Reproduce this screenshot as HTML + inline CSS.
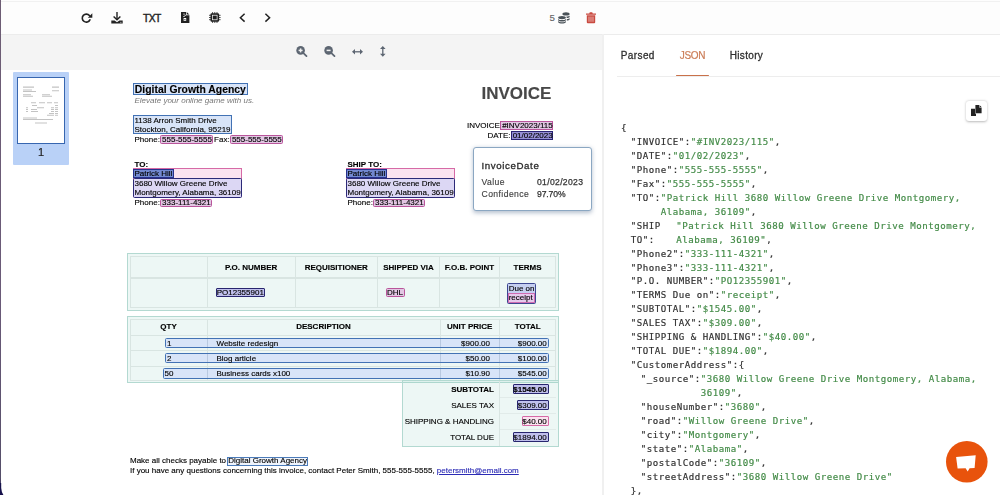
<!DOCTYPE html>
<html lang="en"><head><meta charset="utf-8"><title>Invoice parser</title>
<style>
html,body{margin:0;padding:0}
body{width:1000px;height:495px;position:relative;overflow:hidden;background:#fff;font-family:"Liberation Sans",sans-serif;color:#111}
#c{position:absolute;left:0;top:0;width:1000px;height:495px;filter:blur(0.4px)}
.b{position:absolute}
.t{position:absolute;white-space:nowrap;color:#000;-webkit-text-stroke:0.13px}
.m{position:absolute;white-space:pre;font-family:"DejaVu Sans Mono","Liberation Mono",monospace;font-size:9.1px;letter-spacing:0.522px;line-height:14px;color:#2f2f2f;-webkit-text-stroke:0.18px}
.m i{font-style:normal;color:#428a46}
svg{position:absolute;overflow:visible}
</style></head><body>
<div id="c">
<div class="b" style="left:0.00px;top:0.00px;width:1000.00px;height:34.00px;background:#fdfdfd;"></div>
<div class="b" style="left:0.00px;top:1.00px;width:1000.00px;height:1.00px;background:#f1f1f1;"></div>
<div class="b" style="left:0.00px;top:34.00px;width:1000.00px;height:1.00px;background:#ececec;"></div>
<div class="b" style="left:0.00px;top:34.50px;width:603.50px;height:35.50px;background:#f4f4f4;"></div>
<div class="b" style="left:602.40px;top:34.30px;width:2.00px;height:460.70px;background:#f0f0f0;"></div>
<div class="b" style="left:13.30px;top:72.30px;width:55.30px;height:92.30px;background:#b9d1f7;border-radius:1px;"></div>
<div class="b" style="left:17.30px;top:77.20px;width:47.50px;height:66.60px;background:#fff;border:1.4px solid #3766b0;box-sizing:border-box;"></div>
<svg style="left:18px;top:78px" width="46" height="65" viewBox="0 0 46 65"><g fill="#b4b4b4"><rect x="5" y="8.6" width="11" height="1"/><rect x="34" y="8.6" width="7" height="1"/><rect x="5" y="11.6" width="9" height="0.8"/><rect x="5" y="13" width="13" height="0.8"/><rect x="34" y="12.4" width="7" height="0.8"/><rect x="5" y="16.4" width="8" height="0.8"/><rect x="5" y="17.8" width="10" height="0.8"/><rect x="24" y="16.4" width="8" height="0.8"/><rect x="24" y="17.8" width="10" height="0.8"/><rect x="13" y="24.4" width="5" height="0.8"/><rect x="21" y="24.4" width="6" height="0.8"/><rect x="29" y="24.4" width="5" height="0.8"/><rect x="36" y="24.4" width="4" height="0.8"/><rect x="14" y="27" width="5" height="0.8"/><rect x="37" y="27" width="3" height="0.8"/><rect x="8" y="29.4" width="2" height="0.8"/><rect x="19" y="29.4" width="7" height="0.8"/><rect x="33" y="29.4" width="3" height="0.8"/><rect x="37" y="29.4" width="3" height="0.8"/><rect x="8" y="31.2" width="2" height="0.8"/><rect x="13" y="31.2" width="6" height="0.8"/><rect x="33" y="31.2" width="3" height="0.8"/><rect x="37" y="31.2" width="3" height="0.8"/><rect x="8" y="33" width="2" height="0.8"/><rect x="13" y="33" width="7" height="0.8"/><rect x="33" y="33" width="3" height="0.8"/><rect x="37" y="33" width="3" height="0.8"/><rect x="31" y="35" width="5" height="0.8"/><rect x="37" y="35" width="3" height="0.8"/><rect x="29" y="36.8" width="7" height="0.8"/><rect x="37" y="36.8" width="3" height="0.8"/><rect x="5" y="39.6" width="14" height="0.8"/><rect x="5" y="41" width="30" height="0.8"/><rect x="17" y="44.6" width="12" height="0.8"/></g></svg>
<div class="t" style="top:145.00px;font-size:11px;line-height:14px;color:#222;left:-159.00px;width:400px;text-align:center;-webkit-text-stroke:0.2px #222;">1</div>
<svg style="left:81px;top:13px" width="12" height="10" viewBox="0 0 12 10"><path d="M8.4 2.6 A4 4 0 1 0 8.9 6.8" fill="none" stroke="#222" stroke-width="1.6" stroke-linecap="round"/><path d="M11.3 0.3 L11.3 4.8 L6.8 4.8 Z" fill="#222"/></svg>
<svg style="left:111px;top:11.5px" width="12" height="11.6" viewBox="0 0 12 11.6"><path d="M6 0 V7" stroke="#222" stroke-width="1.4" fill="none"/><path d="M2.6 4.4 L6 7.8 L9.4 4.4" stroke="#222" stroke-width="1.4" fill="none"/><path d="M0.3 8.6 H3.6 L6 10.2 L8.4 8.6 H11.7 V11.6 H0.3 Z" fill="#222"/><circle cx="9.9" cy="10.3" r="0.5" fill="#fff"/></svg>
<div class="t" style="top:12.00px;font-size:10.3px;line-height:13px;color:#222;letter-spacing:-0.551px;left:143.00px;-webkit-text-stroke:0.4px #222;">TXT</div>
<svg style="left:181.2px;top:12px" width="8.4" height="11" viewBox="0 0 8.4 11"><path d="M0 0 H5 V3.2 H8.4 V11 H0 Z M5.7 0 L8.4 2.6 H5.7 Z" fill="#222"/><rect x="2.4" y="1.6" width="1.2" height="1" fill="#fff"/><rect x="3.6" y="2.8" width="1.2" height="1" fill="#fff"/><rect x="2.4" y="4" width="1.2" height="1" fill="#fff"/><rect x="2.6" y="6" width="2.6" height="2.8" fill="#fff"/><rect x="3.3" y="7.2" width="1.2" height="0.8" fill="#222"/></svg>
<svg style="left:209px;top:12px" width="11.6" height="11" viewBox="0 0 11.6 11"><g stroke="#222" stroke-width="0.8"><path d="M3.6 0 V11 M5.8 0 V11 M8 0 V11 M0 3.3 H11.6 M0 5.5 H11.6 M0 7.7 H11.6"/></g><rect x="1.5" y="1.3" width="8.6" height="8.4" rx="1.2" fill="#222"/><rect x="3.5" y="3.2" width="4.6" height="4.6" fill="none" stroke="#fff" stroke-width="0.7"/></svg>
<svg style="left:239px;top:13px" width="7" height="10" viewBox="0 0 7 10"><path d="M5.6 0.8 L1.4 4.7 L5.6 8.6" fill="none" stroke="#222" stroke-width="1.5"/></svg>
<svg style="left:264.4px;top:13px" width="7" height="10" viewBox="0 0 7 10"><path d="M1.4 0.8 L5.6 4.7 L1.4 8.6" fill="none" stroke="#222" stroke-width="1.5"/></svg>
<div class="t" style="top:11.00px;font-size:9.8px;line-height:13px;color:#636363;left:549.60px;-webkit-text-stroke:0.1px #636363;">5</div>
<svg style="left:557.8px;top:12.2px" width="11.8" height="11.4" viewBox="0 0 11.8 11.4"><g fill="#4a5258"><ellipse cx="8" cy="1.9" rx="3.6" ry="1.7"/><path d="M8.4 4.4 C10 4.4 11.3 4 11.6 3.4 V5 C11.3 5.7 10 6.1 8.8 6.1 Z"/><path d="M8.8 6.9 C10.2 6.8 11.3 6.5 11.6 5.9 V7.4 C11.3 8 10.2 8.4 8.8 8.5 Z"/><ellipse cx="4" cy="5.6" rx="3.9" ry="1.7"/><path d="M0.1 6.9 C0.8 7.8 2.4 8.1 4 8.1 C5.6 8.1 7.2 7.8 7.9 6.9 V8.3 C7.4 9.2 5.6 9.6 4 9.6 C2.4 9.6 0.6 9.2 0.1 8.3 Z"/><path d="M0.1 9 C0.8 9.9 2.4 10.2 4 10.2 C5.6 10.2 7.2 9.9 7.9 9 V10.2 C7.4 11.1 5.6 11.4 4 11.4 C2.4 11.4 0.6 11.1 0.1 10.2 Z"/></g></svg>
<svg style="left:586px;top:11.8px" width="10" height="11.2" viewBox="0 0 10 11.2"><path d="M0 1.4 H3.2 L3.8 0.3 H6.2 L6.8 1.4 H10 V2.7 H0 Z" fill="#c94a40"/><path d="M0.8 3.3 H9.2 V10.2 Q9.2 11.2 8.2 11.2 H1.8 Q0.8 11.2 0.8 10.2 Z" fill="#c94a40"/><path d="M3 4.6 V9.8 M5 4.6 V9.8 M7 4.6 V9.8" stroke="#efbcb8" stroke-width="0.9"/></svg>
<svg style="left:296.0px;top:46.4px" width="11.4" height="10.8" viewBox="0 0 11.4 10.8"><circle cx="4.6" cy="4.4" r="4.3" fill="#5d6672"/><path d="M7.4 7.2 L10.5 10.1" stroke="#5d6672" stroke-width="1.8" stroke-linecap="round"/><path d="M2.6 4.4 H6.6" stroke="#f1f1f1" stroke-width="1.5"/><path d="M4.6 2.4 V6.4" stroke="#f1f1f1" stroke-width="1.5"/></svg>
<svg style="left:323.8px;top:46.4px" width="11.4" height="10.8" viewBox="0 0 11.4 10.8"><circle cx="4.6" cy="4.4" r="4.3" fill="#5d6672"/><path d="M7.4 7.2 L10.5 10.1" stroke="#5d6672" stroke-width="1.8" stroke-linecap="round"/><path d="M2.6 4.4 H6.6" stroke="#f1f1f1" stroke-width="1.5"/></svg>
<svg style="left:352px;top:49px" width="11" height="5.6" viewBox="0 0 11 5.6"><path d="M0 2.8 L3 0 V5.6 Z M11 2.8 L8 0 V5.6 Z" fill="#5d6672"/><path d="M2.5 2.8 H8.5" stroke="#5d6672" stroke-width="1.3"/></svg>
<svg style="left:379.8px;top:46.4px" width="5.6" height="10.8" viewBox="0 0 5.6 10.8"><path d="M2.8 0 L0 3 H5.6 Z M2.8 10.8 L0 7.8 H5.6 Z" fill="#5d6672"/><path d="M2.8 2.5 V8.3" stroke="#5d6672" stroke-width="1.3"/></svg>
<div class="b" style="left:133.00px;top:83.00px;width:115.00px;height:12.00px;background:#d8e4f8;border:1px solid #4272b4;box-sizing:border-box;"></div>
<div class="t" style="top:83.00px;font-size:10.4px;line-height:14px;font-weight:bold;color:#000;left:134.80px;">Digital Growth Agency</div>
<div class="t" style="top:96.00px;font-size:8px;line-height:10px;font-style:italic;color:#777;left:134.50px;-webkit-text-stroke:0;">Elevate your online game with us.</div>
<div class="b" style="left:133.00px;top:115.00px;width:98.75px;height:19.25px;background:#d8e4f8;border:1px solid #4272b4;box-sizing:border-box;"></div>
<div class="t" style="top:116.00px;font-size:8px;line-height:10px;left:134.50px;">1138 Arron Smith Drive</div>
<div class="t" style="top:125.00px;font-size:8px;line-height:10px;left:134.50px;">Stockton, California, 95219</div>
<div class="b" style="left:160.00px;top:135.00px;width:52.50px;height:8.75px;background:#e2c6e3;border:1px solid #b9559b;box-sizing:border-box;border-radius:1.5px;"></div>
<div class="b" style="left:230.00px;top:135.00px;width:52.50px;height:8.75px;background:#e2c6e3;border:1px solid #b9559b;box-sizing:border-box;border-radius:1.5px;"></div>
<div class="t" style="top:135.00px;font-size:8px;line-height:10px;left:134.50px;">Phone: 555-555-5555 Fax: 555-555-5555</div>
<div class="t" style="top:160.00px;font-size:8px;line-height:10px;font-weight:bold;color:#000;left:134.50px;">TO:</div>
<div class="b" style="left:133.00px;top:168.40px;width:108.80px;height:29.10px;background:#fbe3f0;border:1px solid #d66aa6;box-sizing:border-box;"></div>
<div class="b" style="left:133.00px;top:178.00px;width:108.80px;height:20.40px;background:#dcd7f4;border:1.3px solid #2c2a78;box-sizing:border-box;border-radius:1.5px;"></div>
<div class="b" style="left:133.00px;top:169.20px;width:40.60px;height:9.10px;background:#7288d0;border:1px solid #25318c;box-sizing:border-box;"></div>
<div class="t" style="top:169.00px;font-size:8px;line-height:10px;left:134.50px;">Patrick Hill</div>
<div class="t" style="top:179.00px;font-size:8px;line-height:10px;left:134.50px;">3680 Willow Greene Drive</div>
<div class="t" style="top:188.00px;font-size:8px;line-height:10px;left:134.50px;">Montgomery, Alabama, 36109</div>
<div class="b" style="left:160.30px;top:199.00px;width:51.30px;height:8.00px;background:#e2c6e3;border:1px solid #b9559b;box-sizing:border-box;border-radius:1.5px;"></div>
<div class="t" style="top:198.00px;font-size:8px;line-height:10px;left:134.50px;">Phone: 333-111-4321</div>
<div class="t" style="top:160.00px;font-size:8px;line-height:10px;font-weight:bold;color:#000;left:347.50px;">SHIP TO:</div>
<div class="b" style="left:346.00px;top:168.40px;width:108.80px;height:29.10px;background:#fbe3f0;border:1px solid #d66aa6;box-sizing:border-box;"></div>
<div class="b" style="left:346.00px;top:178.00px;width:108.80px;height:20.40px;background:#dcd7f4;border:1.3px solid #2c2a78;box-sizing:border-box;border-radius:1.5px;"></div>
<div class="b" style="left:346.00px;top:169.20px;width:40.60px;height:9.10px;background:#7288d0;border:1px solid #25318c;box-sizing:border-box;"></div>
<div class="t" style="top:169.00px;font-size:8px;line-height:10px;left:347.50px;">Patrick Hill</div>
<div class="t" style="top:179.00px;font-size:8px;line-height:10px;left:347.50px;">3680 Willow Greene Drive</div>
<div class="t" style="top:188.00px;font-size:8px;line-height:10px;left:347.50px;">Montgomery, Alabama, 36109</div>
<div class="b" style="left:373.30px;top:199.00px;width:51.30px;height:8.00px;background:#e2c6e3;border:1px solid #b9559b;box-sizing:border-box;border-radius:1.5px;"></div>
<div class="t" style="top:198.00px;font-size:8px;line-height:10px;left:347.50px;">Phone: 333-111-4321</div>
<div class="t" style="top:83.00px;font-size:17px;line-height:22px;font-weight:bold;color:#484848;left:481.50px;">INVOICE</div>
<div class="b" style="left:499.50px;top:120.75px;width:53.50px;height:8.75px;background:#e2c6e3;border:1px solid #b9559b;box-sizing:border-box;"></div>
<div class="b" style="left:510.50px;top:130.50px;width:42.50px;height:9.00px;background:#958fd6;border:1.3px solid #2a2472;box-sizing:border-box;"></div>
<div class="t" style="top:121.00px;font-size:8px;line-height:10px;right:447.30px;">INVOICE #INV2023/115</div>
<div class="t" style="top:131.00px;font-size:8px;line-height:10px;right:447.30px;">DATE: 01/02/2023</div>
<div class="b" style="left:127.20px;top:253.30px;width:431.70px;height:57.40px;background:rgba(150,210,198,0.17);border:1.5px solid #b3d9d1;box-sizing:border-box;"></div>
<div class="b" style="left:130.00px;top:256.25px;width:426.20px;height:52.05px;border:1px solid #d9e5e2;box-sizing:border-box;"></div>
<div class="b" style="left:130.00px;top:277.40px;width:426.00px;height:1.20px;background:#d9e5e2;"></div>
<div class="b" style="left:207.00px;top:256.25px;width:1.00px;height:51.75px;background:#d9e5e2;"></div>
<div class="b" style="left:294.50px;top:256.25px;width:1.00px;height:51.75px;background:#d9e5e2;"></div>
<div class="b" style="left:377.00px;top:256.25px;width:1.00px;height:51.75px;background:#d9e5e2;"></div>
<div class="b" style="left:439.00px;top:256.25px;width:1.00px;height:51.75px;background:#d9e5e2;"></div>
<div class="b" style="left:499.00px;top:256.25px;width:1.00px;height:51.75px;background:#d9e5e2;"></div>
<div class="t" style="top:263.00px;font-size:8px;line-height:10px;font-weight:bold;color:#000;left:51.25px;width:400px;text-align:center;">P.O. NUMBER</div>
<div class="t" style="top:263.00px;font-size:8px;line-height:10px;font-weight:bold;color:#000;left:136.25px;width:400px;text-align:center;">REQUISITIONER</div>
<div class="t" style="top:263.00px;font-size:8px;line-height:10px;font-weight:bold;color:#000;left:208.50px;width:400px;text-align:center;">SHIPPED VIA</div>
<div class="t" style="top:263.00px;font-size:8px;line-height:10px;font-weight:bold;color:#000;left:269.50px;width:400px;text-align:center;">F.O.B. POINT</div>
<div class="t" style="top:263.00px;font-size:8px;line-height:10px;font-weight:bold;color:#000;left:327.50px;width:400px;text-align:center;">TERMS</div>
<div class="b" style="left:215.50px;top:288.00px;width:49.00px;height:9.00px;background:#c0c0ed;border:1px solid #28266f;box-sizing:border-box;border-radius:1px;"></div>
<div class="t" style="top:288.00px;font-size:8px;line-height:10px;left:216.70px;">PO12355901</div>
<div class="b" style="left:385.50px;top:288.00px;width:19.00px;height:9.00px;background:#e2c6e3;border:1px solid #b9559b;box-sizing:border-box;border-radius:1.5px;"></div>
<div class="t" style="top:288.00px;font-size:8px;line-height:10px;left:387.00px;">DHL</div>
<div class="b" style="left:507.30px;top:283.20px;width:28.50px;height:20.60px;background:#c5cff0;border:1.3px solid #3c4791;box-sizing:border-box;border-radius:1.5px;"></div>
<div class="b" style="left:508.40px;top:292.60px;width:26.30px;height:10.10px;background:#e6c9ec;border:1px solid #cf6cb2;box-sizing:border-box;"></div>
<div class="t" style="top:284.00px;font-size:8px;line-height:10px;left:508.70px;">Due on</div>
<div class="t" style="top:293.00px;font-size:8px;line-height:10px;left:508.70px;">receipt</div>
<div class="b" style="left:127.20px;top:315.90px;width:431.70px;height:67.60px;background:rgba(150,210,198,0.17);border:1.5px solid #b3d9d1;box-sizing:border-box;"></div>
<div class="b" style="left:130.00px;top:319.00px;width:426.20px;height:62.00px;border:1px solid #d9e5e2;box-sizing:border-box;"></div>
<div class="b" style="left:130.00px;top:335.00px;width:425.50px;height:1.00px;background:#d9e5e2;"></div>
<div class="b" style="left:130.00px;top:350.00px;width:425.50px;height:1.00px;background:#d9e5e2;"></div>
<div class="b" style="left:130.00px;top:365.50px;width:425.50px;height:1.00px;background:#d9e5e2;"></div>
<div class="b" style="left:207.00px;top:319.00px;width:1.00px;height:62.00px;background:#d9e5e2;"></div>
<div class="b" style="left:440.00px;top:319.00px;width:1.00px;height:62.00px;background:#d9e5e2;"></div>
<div class="b" style="left:499.00px;top:319.00px;width:1.00px;height:62.00px;background:#d9e5e2;"></div>
<div class="t" style="top:322.00px;font-size:8px;line-height:10px;font-weight:bold;color:#000;left:-31.50px;width:400px;text-align:center;">QTY</div>
<div class="t" style="top:322.00px;font-size:8px;line-height:10px;font-weight:bold;color:#000;left:123.50px;width:400px;text-align:center;">DESCRIPTION</div>
<div class="t" style="top:322.00px;font-size:8px;line-height:10px;font-weight:bold;color:#000;left:269.70px;width:400px;text-align:center;">UNIT PRICE</div>
<div class="t" style="top:322.00px;font-size:8px;line-height:10px;font-weight:bold;color:#000;left:327.70px;width:400px;text-align:center;">TOTAL</div>
<div class="b" style="left:165.00px;top:337.50px;width:383.70px;height:10.50px;background:#d8e4f8;border:1px solid #4272b4;box-sizing:border-box;border-radius:1.5px;"></div>
<div class="b" style="left:207.00px;top:338.50px;width:1.00px;height:8.50px;background:#b9c9e0;"></div>
<div class="b" style="left:440.00px;top:338.50px;width:1.00px;height:8.50px;background:#b9c9e0;"></div>
<div class="b" style="left:499.00px;top:338.50px;width:1.00px;height:8.50px;background:#b9c9e0;"></div>
<div class="t" style="top:339.00px;font-size:8px;line-height:10px;left:167.00px;">1</div>
<div class="t" style="top:339.00px;font-size:8px;line-height:10px;left:216.50px;">Website redesign</div>
<div class="t" style="top:339.00px;font-size:8px;line-height:10px;right:510.00px;">$900.00</div>
<div class="t" style="top:339.00px;font-size:8px;line-height:10px;right:453.30px;">$900.00</div>
<div class="b" style="left:165.00px;top:353.00px;width:383.70px;height:10.30px;background:#d8e4f8;border:1px solid #4272b4;box-sizing:border-box;border-radius:1.5px;"></div>
<div class="b" style="left:207.00px;top:354.00px;width:1.00px;height:8.30px;background:#b9c9e0;"></div>
<div class="b" style="left:440.00px;top:354.00px;width:1.00px;height:8.30px;background:#b9c9e0;"></div>
<div class="b" style="left:499.00px;top:354.00px;width:1.00px;height:8.30px;background:#b9c9e0;"></div>
<div class="t" style="top:354.00px;font-size:8px;line-height:10px;left:167.00px;">2</div>
<div class="t" style="top:354.00px;font-size:8px;line-height:10px;left:216.50px;">Blog article</div>
<div class="t" style="top:354.00px;font-size:8px;line-height:10px;right:510.00px;">$50.00</div>
<div class="t" style="top:354.00px;font-size:8px;line-height:10px;right:453.30px;">$100.00</div>
<div class="b" style="left:163.00px;top:368.00px;width:385.70px;height:10.50px;background:#d8e4f8;border:1px solid #4272b4;box-sizing:border-box;border-radius:1.5px;"></div>
<div class="b" style="left:207.00px;top:369.00px;width:1.00px;height:8.50px;background:#b9c9e0;"></div>
<div class="b" style="left:440.00px;top:369.00px;width:1.00px;height:8.50px;background:#b9c9e0;"></div>
<div class="b" style="left:499.00px;top:369.00px;width:1.00px;height:8.50px;background:#b9c9e0;"></div>
<div class="t" style="top:369.00px;font-size:8px;line-height:10px;left:164.50px;">50</div>
<div class="t" style="top:369.00px;font-size:8px;line-height:10px;left:216.50px;">Business cards x100</div>
<div class="t" style="top:369.00px;font-size:8px;line-height:10px;right:510.00px;">$10.90</div>
<div class="t" style="top:369.00px;font-size:8px;line-height:10px;right:453.30px;">$545.00</div>
<div class="b" style="left:402.30px;top:379.70px;width:156.90px;height:67.60px;background:rgba(150,210,198,0.17);border:1.5px solid #b3d9d1;box-sizing:border-box;"></div>
<div class="b" style="left:498.50px;top:381.00px;width:1.00px;height:65.00px;background:#d9e5e2;"></div>
<div class="b" style="left:499.50px;top:396.50px;width:56.50px;height:1.00px;background:#e1ebe9;"></div>
<div class="b" style="left:499.50px;top:412.50px;width:56.50px;height:1.00px;background:#e1ebe9;"></div>
<div class="b" style="left:499.50px;top:428.50px;width:56.50px;height:1.00px;background:#e1ebe9;"></div>
<div class="b" style="left:512.50px;top:383.80px;width:36.20px;height:10.20px;background:#c0c0ed;border:1.4px solid #28266f;box-sizing:border-box;border-radius:1px;"></div>
<div class="b" style="left:516.50px;top:400.00px;width:32.20px;height:10.00px;background:#c0c0ed;border:1px solid #28266f;box-sizing:border-box;border-radius:1px;"></div>
<div class="b" style="left:521.50px;top:416.00px;width:27.20px;height:10.00px;background:#fbe3f0;border:1px solid #d66aa6;box-sizing:border-box;border-radius:1px;"></div>
<div class="b" style="left:512.50px;top:432.00px;width:36.20px;height:10.00px;background:#c0c0ed;border:1px solid #28266f;box-sizing:border-box;border-radius:1px;"></div>
<div class="t" style="top:385.00px;font-size:8px;line-height:10px;font-weight:bold;color:#000;right:506.00px;">SUBTOTAL</div>
<div class="t" style="top:385.00px;font-size:8px;line-height:10px;font-weight:bold;color:#000;right:453.30px;">$1545.00</div>
<div class="t" style="top:401.00px;font-size:8px;line-height:10px;right:506.00px;">SALES TAX</div>
<div class="t" style="top:401.00px;font-size:8px;line-height:10px;right:453.30px;">$309.00</div>
<div class="t" style="top:417.00px;font-size:8px;line-height:10px;right:506.00px;">SHIPPING &amp; HANDLING</div>
<div class="t" style="top:417.00px;font-size:8px;line-height:10px;right:453.30px;">$40.00</div>
<div class="t" style="top:433.00px;font-size:8px;line-height:10px;right:506.00px;">TOTAL DUE</div>
<div class="t" style="top:433.00px;font-size:8px;line-height:10px;right:453.30px;">$1894.00</div>
<div class="b" style="left:227.00px;top:456.50px;width:81.00px;height:9.50px;background:#eff4fc;border:1px solid #4b7bb9;box-sizing:border-box;"></div>
<div class="t" style="top:456.00px;font-size:8px;line-height:10px;left:130.00px;">Make all checks payable to Digital Growth Agency</div>
<div class="t" style="top:466.00px;font-size:8px;line-height:10px;left:130.00px;">If you have any questions concerning this invoice, contact Peter Smith, 555-555-5555, <span style="color:#2b2bb5;text-decoration:underline">petersmith@email.com</span></div>
<div class="b" style="left:473.30px;top:147.40px;width:118.40px;height:63.80px;background:#fff;border:1px solid #8ba7c2;box-sizing:border-box;border-radius:3px;box-shadow:0 1.5px 4px rgba(60,90,130,.38);"></div>
<div class="t" style="top:159.00px;font-size:9.7px;line-height:13px;color:#2b2b2b;letter-spacing:0.616px;left:481.50px;-webkit-text-stroke:0.3px #2b2b2b;">InvoiceDate</div>
<div class="t" style="top:177.00px;font-size:8.6px;line-height:11px;color:#3d3d3d;letter-spacing:0.429px;left:481.50px;">Value</div>
<div class="t" style="top:177.00px;font-size:8.6px;line-height:11px;color:#333;letter-spacing:0.326px;left:537.00px;-webkit-text-stroke:0.25px #333;">01/02/2023</div>
<div class="t" style="top:189.00px;font-size:8.6px;line-height:11px;color:#3d3d3d;letter-spacing:0.429px;left:481.50px;">Confidence</div>
<div class="t" style="top:189.00px;font-size:8.6px;line-height:11px;color:#333;letter-spacing:-0.111px;left:537.00px;-webkit-text-stroke:0.25px #333;">97.70%</div>
<div class="t" style="top:49.00px;font-size:10px;line-height:13px;color:#303030;letter-spacing:0.386px;left:620.80px;-webkit-text-stroke:0.3px #303030;">Parsed</div>
<div class="t" style="top:49.00px;font-size:10px;line-height:13px;color:#cb7d57;letter-spacing:-0.293px;left:679.70px;-webkit-text-stroke:0.2px #cb7d57;">JSON</div>
<div class="t" style="top:49.00px;font-size:10px;line-height:13px;color:#303030;letter-spacing:0.341px;left:729.70px;-webkit-text-stroke:0.3px #303030;">History</div>
<div class="b" style="left:617.00px;top:76.00px;width:383.00px;height:1.00px;background:#ededed;"></div>
<div class="b" style="left:675.50px;top:74.70px;width:33.50px;height:1.80px;background:#c9714a;border-radius:1px;"></div>
<div class="b" style="left:965.50px;top:100.60px;width:21.80px;height:20.20px;background:#fff;border-radius:3px;box-shadow:0 0.5px 2.5px rgba(0,0,0,.28);"></div>
<svg style="left:971px;top:104.8px" width="10.6" height="11" viewBox="0 0 10.6 11"><path d="M0 3.8 H4 V8.6 H5 V11 H0 Z" fill="#222"/><path d="M4.4 0 H8.2 V2.6 H10.6 V8.2 H4.4 Z M8.7 0.2 L10.5 2.1 H8.7 Z" fill="#222"/></svg>
<div class="m" style="left:620.90px;top:121.00px">{</div>
<div class="m" style="left:630.80px;top:134.95px">"INVOICE":<i>"#INV2023/115"</i>,</div>
<div class="m" style="left:630.80px;top:148.90px">"DATE":<i>"01/02/2023"</i>,</div>
<div class="m" style="left:630.80px;top:162.85px">"Phone":<i>"555-555-5555"</i>,</div>
<div class="m" style="left:630.80px;top:176.80px">"Fax":<i>"555-555-5555"</i>,</div>
<div class="m" style="left:630.80px;top:190.75px">"TO":<i>"Patrick Hill 3680 Willow Greene Drive Montgomery,</i></div>
<div class="m" style="left:660.80px;top:204.70px"><i>Alabama, 36109"</i>,</div>
<div class="m" style="left:630.80px;top:218.65px">"SHIP</div>
<div class="m" style="left:676.30px;top:218.65px"><i>"Patrick Hill 3680 Willow Greene Drive Montgomery,</i></div>
<div class="m" style="left:630.80px;top:232.60px">TO":</div>
<div class="m" style="left:676.30px;top:232.60px"><i>Alabama, 36109"</i>,</div>
<div class="m" style="left:630.80px;top:246.55px">"Phone2":<i>"333-111-4321"</i>,</div>
<div class="m" style="left:630.80px;top:260.50px">"Phone3":<i>"333-111-4321"</i>,</div>
<div class="m" style="left:630.80px;top:274.45px">"P.O. NUMBER":<i>"PO12355901"</i>,</div>
<div class="m" style="left:630.80px;top:288.40px">"TERMS Due on":<i>"receipt"</i>,</div>
<div class="m" style="left:630.80px;top:302.35px">"SUBTOTAL":<i>"$1545.00"</i>,</div>
<div class="m" style="left:630.80px;top:316.30px">"SALES TAX":<i>"$309.00"</i>,</div>
<div class="m" style="left:630.80px;top:330.25px">"SHIPPING &amp; HANDLING":<i>"$40.00"</i>,</div>
<div class="m" style="left:630.80px;top:344.20px">"TOTAL DUE":<i>"$1894.00"</i>,</div>
<div class="m" style="left:630.80px;top:358.15px">"CustomerAddress":{</div>
<div class="m" style="left:640.80px;top:372.10px">"_source":<i>"3680 Willow Greene Drive Montgomery, Alabama,</i></div>
<div class="m" style="left:700.80px;top:386.05px"><i>36109"</i>,</div>
<div class="m" style="left:640.80px;top:400.00px">"houseNumber":<i>"3680"</i>,</div>
<div class="m" style="left:640.80px;top:413.95px">"road":<i>"Willow Greene Drive"</i>,</div>
<div class="m" style="left:640.80px;top:427.90px">"city":<i>"Montgomery"</i>,</div>
<div class="m" style="left:640.80px;top:441.85px">"state":<i>"Alabama"</i>,</div>
<div class="m" style="left:640.80px;top:455.80px">"postalCode":<i>"36109"</i>,</div>
<div class="m" style="left:640.80px;top:469.75px">"streetAddress":<i>"3680 Willow Greene Drive"</i></div>
<div class="m" style="left:630.80px;top:483.70px">},</div>
<svg style="left:945.8px;top:440.5px" width="41.6" height="41.6" viewBox="0 0 41.6 41.6"><circle cx="20.8" cy="20.8" r="20.8" fill="#e8530c"/><path d="M10.1 16.1 L29.7 14.2 L28.6 27.1 L23.6 27.2 L21.7 30.6 L19.6 27.3 L11.6 27.5 Z" fill="#fff"/></svg>
</div>
<div class="b" style="left:0;top:0;width:1.2px;height:495px;background:linear-gradient(#6d5d74 0%,#6a5a78 60%,#554e69 96.5%,#1a1450 100%)"></div>
<svg style="left:0;top:483px" width="6" height="12" viewBox="0 0 6 12"><path d="M0 0 H1.2 V5 Q1.5 9.2 3.4 12 H0 Z" fill="#17124c"/></svg>
</body></html>
